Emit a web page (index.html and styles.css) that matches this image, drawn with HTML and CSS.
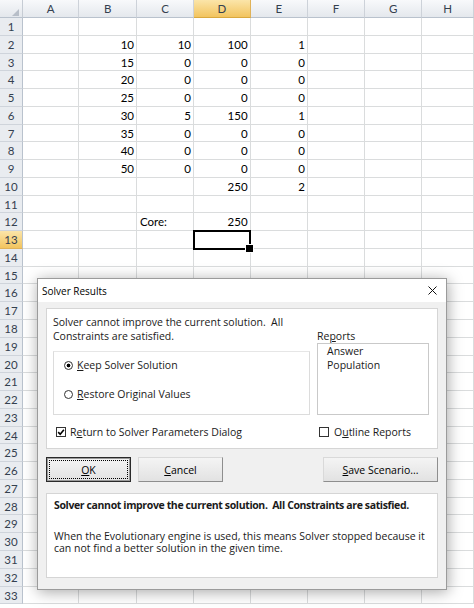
FILE: index.html
```html
<!DOCTYPE html>
<html>
<head>
<meta charset="utf-8">
<title>Solver Results</title>
<link rel="stylesheet" href="styles.css">
</head>
<body>
<div class="sheet">
  <div class="corner"><svg class="tri" viewBox="0 0 23 18" width="23" height="18"><polygon points="19,9 19,16 12,16" fill="#b7bec8"/></svg></div>
  <div class="ch">A</div><div class="ch">B</div><div class="ch">C</div><div class="ch sel">D</div><div class="ch">E</div><div class="ch">F</div><div class="ch">G</div><div class="ch">H</div>

  <div class="rh">1</div><div class="c"></div><div class="c"></div><div class="c"></div><div class="c"></div><div class="c"></div><div class="c"></div><div class="c"></div><div class="c"></div>
  <div class="rh">2</div><div class="c"></div><div class="c">10</div><div class="c">10</div><div class="c">100</div><div class="c">1</div><div class="c"></div><div class="c"></div><div class="c"></div>
  <div class="rh">3</div><div class="c"></div><div class="c">15</div><div class="c">0</div><div class="c">0</div><div class="c">0</div><div class="c"></div><div class="c"></div><div class="c"></div>
  <div class="rh">4</div><div class="c"></div><div class="c">20</div><div class="c">0</div><div class="c">0</div><div class="c">0</div><div class="c"></div><div class="c"></div><div class="c"></div>
  <div class="rh">5</div><div class="c"></div><div class="c">25</div><div class="c">0</div><div class="c">0</div><div class="c">0</div><div class="c"></div><div class="c"></div><div class="c"></div>
  <div class="rh">6</div><div class="c"></div><div class="c">30</div><div class="c">5</div><div class="c">150</div><div class="c">1</div><div class="c"></div><div class="c"></div><div class="c"></div>
  <div class="rh">7</div><div class="c"></div><div class="c">35</div><div class="c">0</div><div class="c">0</div><div class="c">0</div><div class="c"></div><div class="c"></div><div class="c"></div>
  <div class="rh">8</div><div class="c"></div><div class="c">40</div><div class="c">0</div><div class="c">0</div><div class="c">0</div><div class="c"></div><div class="c"></div><div class="c"></div>
  <div class="rh">9</div><div class="c"></div><div class="c">50</div><div class="c">0</div><div class="c">0</div><div class="c">0</div><div class="c"></div><div class="c"></div><div class="c"></div>
  <div class="rh">10</div><div class="c"></div><div class="c"></div><div class="c"></div><div class="c">250</div><div class="c">2</div><div class="c"></div><div class="c"></div><div class="c"></div>
  <div class="rh">11</div><div class="c"></div><div class="c"></div><div class="c"></div><div class="c"></div><div class="c"></div><div class="c"></div><div class="c"></div><div class="c"></div>
  <div class="rh">12</div><div class="c"></div><div class="c"></div><div class="c t">Core:</div><div class="c">250</div><div class="c"></div><div class="c"></div><div class="c"></div><div class="c"></div>
  <div class="rh sel">13</div><div class="c"></div><div class="c"></div><div class="c"></div><div class="c active"></div><div class="c"></div><div class="c"></div><div class="c"></div><div class="c"></div>
  <div class="rh">14</div><div class="c"></div><div class="c"></div><div class="c"></div><div class="c"></div><div class="c"></div><div class="c"></div><div class="c"></div><div class="c"></div>
  <div class="rh">15</div><div class="c"></div><div class="c"></div><div class="c"></div><div class="c"></div><div class="c"></div><div class="c"></div><div class="c"></div><div class="c"></div>
  <div class="rh">16</div><div class="c"></div><div class="c"></div><div class="c"></div><div class="c"></div><div class="c"></div><div class="c"></div><div class="c"></div><div class="c"></div>
  <div class="rh">17</div><div class="c"></div><div class="c"></div><div class="c"></div><div class="c"></div><div class="c"></div><div class="c"></div><div class="c"></div><div class="c"></div>
  <div class="rh">18</div><div class="c"></div><div class="c"></div><div class="c"></div><div class="c"></div><div class="c"></div><div class="c"></div><div class="c"></div><div class="c"></div>
  <div class="rh">19</div><div class="c"></div><div class="c"></div><div class="c"></div><div class="c"></div><div class="c"></div><div class="c"></div><div class="c"></div><div class="c"></div>
  <div class="rh">20</div><div class="c"></div><div class="c"></div><div class="c"></div><div class="c"></div><div class="c"></div><div class="c"></div><div class="c"></div><div class="c"></div>
  <div class="rh">21</div><div class="c"></div><div class="c"></div><div class="c"></div><div class="c"></div><div class="c"></div><div class="c"></div><div class="c"></div><div class="c"></div>
  <div class="rh">22</div><div class="c"></div><div class="c"></div><div class="c"></div><div class="c"></div><div class="c"></div><div class="c"></div><div class="c"></div><div class="c"></div>
  <div class="rh">23</div><div class="c"></div><div class="c"></div><div class="c"></div><div class="c"></div><div class="c"></div><div class="c"></div><div class="c"></div><div class="c"></div>
  <div class="rh">24</div><div class="c"></div><div class="c"></div><div class="c"></div><div class="c"></div><div class="c"></div><div class="c"></div><div class="c"></div><div class="c"></div>
  <div class="rh">25</div><div class="c"></div><div class="c"></div><div class="c"></div><div class="c"></div><div class="c"></div><div class="c"></div><div class="c"></div><div class="c"></div>
  <div class="rh">26</div><div class="c"></div><div class="c"></div><div class="c"></div><div class="c"></div><div class="c"></div><div class="c"></div><div class="c"></div><div class="c"></div>
  <div class="rh">27</div><div class="c"></div><div class="c"></div><div class="c"></div><div class="c"></div><div class="c"></div><div class="c"></div><div class="c"></div><div class="c"></div>
  <div class="rh">28</div><div class="c"></div><div class="c"></div><div class="c"></div><div class="c"></div><div class="c"></div><div class="c"></div><div class="c"></div><div class="c"></div>
  <div class="rh">29</div><div class="c"></div><div class="c"></div><div class="c"></div><div class="c"></div><div class="c"></div><div class="c"></div><div class="c"></div><div class="c"></div>
  <div class="rh">30</div><div class="c"></div><div class="c"></div><div class="c"></div><div class="c"></div><div class="c"></div><div class="c"></div><div class="c"></div><div class="c"></div>
  <div class="rh">31</div><div class="c"></div><div class="c"></div><div class="c"></div><div class="c"></div><div class="c"></div><div class="c"></div><div class="c"></div><div class="c"></div>
  <div class="rh">32</div><div class="c"></div><div class="c"></div><div class="c"></div><div class="c"></div><div class="c"></div><div class="c"></div><div class="c"></div><div class="c"></div>
  <div class="rh">33</div><div class="c"></div><div class="c"></div><div class="c"></div><div class="c"></div><div class="c"></div><div class="c"></div><div class="c"></div><div class="c"></div>
</div>

<div class="dialog">
  <div class="titlebar">
    <span class="title">Solver Results</span>
    <svg class="close" viewBox="0 0 9 9" width="9" height="9"><path d="M0.5 0.5L8.5 8.5M8.5 0.5L0.5 8.5" stroke="#111" stroke-width="1" fill="none"/></svg>
  </div>
  <div class="dbody">
    <div class="panel main">
      <p class="msg">Solver cannot improve the current solution.&nbsp; All<br>Constraints are satisfied.</p>
      <div class="rlabel">Re<u>p</u>orts</div>
      <div class="group">
        <div class="radio"><span class="rb on"></span><span><u>K</u>eep Solver Solution</span></div>
        <div class="radio"><span class="rb"></span><span><u>R</u>estore Original Values</span></div>
      </div>
      <div class="listbox">
        <div>Answer</div>
        <div>Population</div>
      </div>
      <div class="check left">
        <svg class="cb" viewBox="0 0 10 10" width="10" height="10"><rect x="0.5" y="0.5" width="9" height="9" fill="#fff" stroke="#333"/><path d="M2.2 5.1L4.2 7.2L7.9 2.7" fill="none" stroke="#000" stroke-width="1.6"/></svg>
        <span>R<u>e</u>turn to Solver Parameters Dialog</span>
      </div>
      <div class="check right">
        <svg class="cb" viewBox="0 0 10 10" width="10" height="10"><rect x="0.5" y="0.5" width="9" height="9" fill="#fff" stroke="#333"/></svg>
        <span>O<u>u</u>tline Reports</span>
      </div>
    </div>
    <div class="buttons">
      <button class="btn default"><span class="focus"><u>O</u>K</span></button>
      <button class="btn"><u>C</u>ancel</button>
      <button class="btn save"><u>S</u>ave Scenario...</button>
    </div>
    <div class="panel info">
      <p class="bold">Solver cannot improve the current solution.&nbsp; All Constraints are satisfied.</p>
      <p class="desc">When the Evolutionary engine is used, this means Solver stopped because it<br>can not find a better solution in the given time.</p>
    </div>
  </div>
</div>
</body>
</html>
```
FILE: styles.css
```css
* { box-sizing: border-box; }
html, body { margin: 0; padding: 0; }
body {
  width: 474px;
  height: 608px;
  overflow: hidden;
  position: relative;
  background: #fff;
  font-family: Lato, "Open Sans", sans-serif;
}

/* spreadsheet */
.sheet {
  display: grid;
  grid-template-columns: 23px 56.3px 57.7px 57px 56.6px 57.4px 57px 57.3px 1fr;
  grid-template-rows: 18px;
  grid-auto-rows: 17.77px;
  font-size: 11.5px;
  color: #000;
}
.corner {
  background: linear-gradient(#f7f8fa, #e3e7ec);
  border-right: 1px solid #c6ccd4;
  border-bottom: 1px solid #b9c2cd;
}
.tri { display: block; }
.ch {
  background: linear-gradient(#f8f9fb, #e4e8ed);
  border-right: 1px solid #cdd2d9;
  border-bottom: 1px solid #b9c2cd;
  text-align: center;
  line-height: 17px;
  color: #34404f;
}
.ch.sel {
  background: linear-gradient(#fbe5a9, #f2c45f);
  border-right-color: #e0b258;
  border-bottom-color: #d9a83e;
}
.rh {
  background: #e9ecf0;
  border-right: 1px solid #b9c2cd;
  border-bottom: 1px solid #cfd4db;
  text-align: center;
  line-height: 17px;
  color: #34404f;
}
.rh.sel {
  background: linear-gradient(#fbe5a9, #f2c45f);
  border-bottom-color: #e0b258;
}
.c {
  border-right: 1px solid #dadcdd;
  border-bottom: 1px solid #dadcdd;
  text-align: right;
  padding-right: 2px;
  line-height: 17px;
  white-space: nowrap;
}
.c.t { text-align: left; padding-left: 3px; }
.c.active { position: relative; z-index: 1; }
.c.active::after {
  content: "";
  position: absolute;
  left: -1px; top: -1px; right: -1px; bottom: -2px;
  border: 2px solid #000;
}
.c.active::before {
  content: "";
  position: absolute;
  right: -4px; bottom: -5px;
  width: 7px; height: 7px;
  background: #000;
  border: 1px solid #fff;
  z-index: 2;
}

/* dialog window */
.dialog {
  position: absolute;
  left: 37px;
  top: 278px;
  width: 410px;
  height: 312px;
  border: 1px solid #9b9b9b;
  background: #f0f0f0;
  box-shadow: 1px 2px 14px rgba(0, 0, 0, 0.35);
  font-family: "Open Sans", sans-serif;
  font-size: 10.5px;
  color: #1a1a1a;
  display: flex;
  flex-direction: column;
}
.titlebar {
  height: 23px;
  background: #fff;
  display: flex;
  align-items: center;
  justify-content: space-between;
  padding: 0 9px 0 4px;
}
.title { font-size: 10px; color: #000; }
.close { display: block; }
.dbody {
  flex: 1;
  padding: 6px 8px 11px;
  display: flex;
  flex-direction: column;
}
.panel {
  background: #fff;
  border: 1px solid #d5d5d5;
}
.panel.main {
  height: 141px;
  display: grid;
  grid-template-columns: 257px 112px;
  column-gap: 7px;
  align-content: start;
  padding: 7px 8px 0 6px;
}
.msg { margin: 0; line-height: 13.7px; white-space: nowrap; }
.rlabel { align-self: end; line-height: 13.7px; }
u { text-underline-offset: 1px; }
.group {
  align-self: end;
  height: 64px;
  border: 1px solid #dcdcdc;
  border-top-color: #e6e6e6;
  padding: 7px 0 0 10px;
  display: flex;
  flex-direction: column;
  gap: 15.5px;
}
.radio {
  display: flex;
  align-items: center;
  gap: 4px;
  line-height: 13px;
}
.rb {
  width: 9px;
  height: 9px;
  border: 1px solid #333;
  border-radius: 50%;
  background: #fff;
  flex: none;
}
.rb.on { background: radial-gradient(circle, #000 0 1.6px, #fff 2.2px); }
.listbox {
  align-self: end;
  height: 72px;
  border: 1px solid #c9c9c9;
  padding: 1px 0 0 9px;
  line-height: 13.7px;
}
.check {
  margin-top: 10.5px;
  display: flex;
  align-items: center;
  line-height: 13px;
}
.check.left { padding-left: 3px; gap: 4px; }
.check.right { padding-left: 2px; gap: 5px; }
.cb { display: block; flex: none; }

.buttons {
  display: flex;
  gap: 7px;
  margin-top: 8px;
  height: 25px;
}
.btn {
  width: 85px;
  height: 25px;
  font: inherit;
  color: #000;
  background: linear-gradient(#f4f4f4, #e2e2e2);
  border: 1px solid;
  border-color: #d9d9d9 #8e8e8e #8e8e8e #d9d9d9;
  padding: 0;
}
.btn.save { width: 115px; margin-left: auto; }
.btn.default {
  border: 1px solid #2a2a2a;
  box-shadow: inset 0 0 0 1px #9a9a9a;
  padding: 2px;
}
.focus {
  display: flex;
  align-items: center;
  justify-content: center;
  height: 100%;
  border: 1px dotted #000;
}

.panel.info {
  margin-top: 11px;
  height: 85px;
  padding: 5px 7px;
}
.bold {
  margin: 0;
  font-weight: 700;
  letter-spacing: -0.37px;
  line-height: 13px;
  white-space: nowrap;
}
.desc { margin: 17.7px 0 0; line-height: 12.5px; white-space: nowrap; }
```
